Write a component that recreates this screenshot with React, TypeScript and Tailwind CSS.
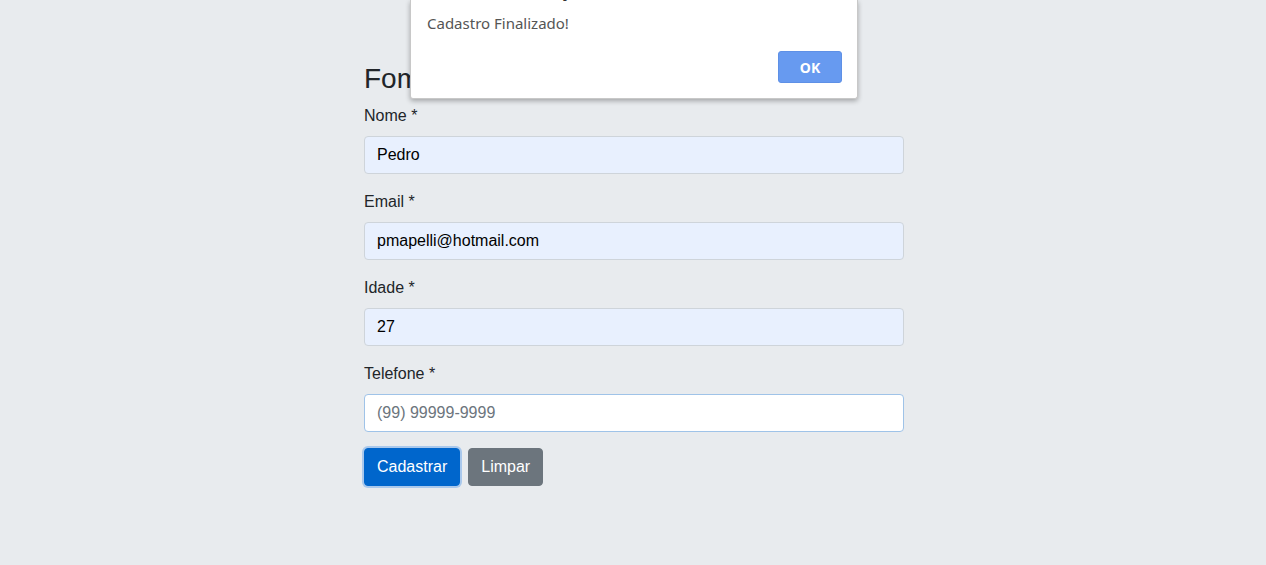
import React from "react";

function Field({ label, value, placeholder, focused }: { label: string; value?: string; placeholder?: string; focused?: boolean }) {
  return (
    <div className="flex flex-col gap-2">
      <label className="text-[16px] leading-6 text-[#212529]">{label}</label>
      <input
        readOnly
        value={value ?? ""}
        placeholder={placeholder}
        className={
          "block w-full h-[38px] px-3 rounded-[4px] border text-[16px] text-black outline-none placeholder:text-[#6c757d] " +
          (focused ? "bg-white border-[#9fc3e8]" : "bg-[#e8f0fe] border-[#ced4da]")
        }
        style={{ fontFamily: '"Liberation Sans", Arial, sans-serif' }}
      />
    </div>
  );
}

export default function App() {
  return (
    <div
      className="relative w-[1266px] h-[565px] bg-[#e8ebee] overflow-hidden flex justify-center pl-[2px]"
      style={{ fontFamily: '"Liberation Sans", Arial, sans-serif' }}
    >
      <div className="w-[540px] pt-[62px] flex flex-col gap-4">
        <div className="flex flex-col gap-2">
          <h3 className="text-[28px] leading-[34px] text-[#212529]">Fomulário de Cadastro</h3>
          <Field label="Nome *" value="Pedro" />
        </div>
        <Field label="Email *" value="pmapelli@hotmail.com" />
        <Field label="Idade *" value="27" />
        <Field label="Telefone *" placeholder="(99) 99999-9999" focused />
        <div className="flex gap-2">
          <button className="h-[38px] px-3 rounded-[4px] bg-[#0066cc] text-white text-[16px] border border-[#0066cc] ring-2 ring-[#a9c8ec]">
            Cadastrar
          </button>
          <button className="h-[38px] px-3 rounded-[4px] bg-[#6c757d] text-white text-[16px] border border-[#6c757d]">
            Limpar
          </button>
        </div>
      </div>

      <div
        className="absolute left-[410px] top-0 w-[448px] h-[99px] bg-white rounded-b-[3px] border border-t-0 border-[#c8c8c8] shadow-[0_2px_5px_rgba(0,0,0,0.3)] flex flex-col pl-4 pr-[15px] pt-[13px]"
        style={{ fontFamily: '"Noto Sans", "Open Sans", sans-serif' }}
      >
        <div className="absolute left-[16px] top-[-19px] text-[16px] leading-5 font-bold text-[#333]">localhost:3000 says</div>
        <div className="text-[15px] leading-5 text-[#555]">Cadastro Finalizado!</div>
        <div className="flex justify-end pt-[18px]">
          <button className="w-[64px] h-[32px] rounded-[3px] bg-[#679af0] border border-[#5e90e6] text-white text-[14px] font-bold">
            OK
          </button>
        </div>
      </div>
    </div>
  );
}
